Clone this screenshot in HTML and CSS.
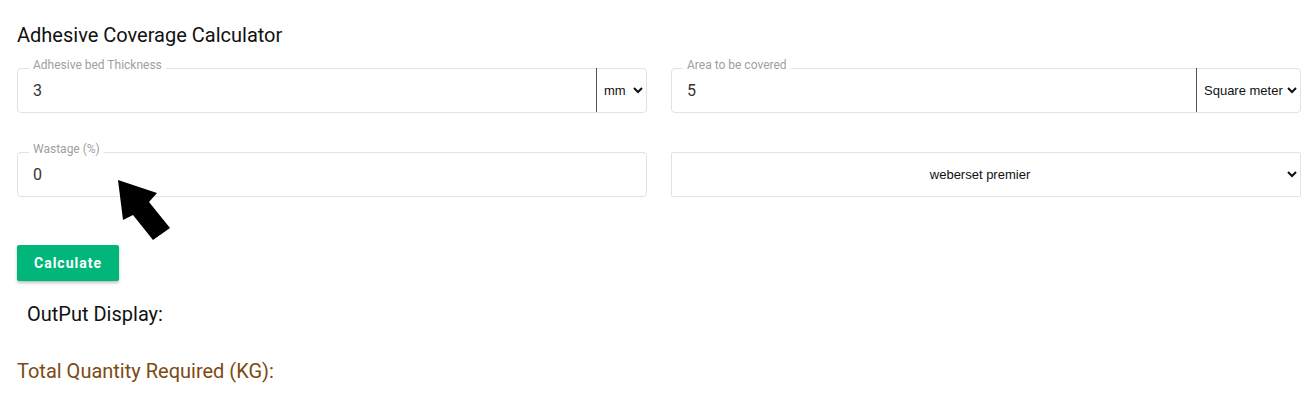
FILE: index.html
```html
<!DOCTYPE html>
<html>
<head>
<meta charset="utf-8">
<link rel="stylesheet" href="styles.css">
</head>
<body>
<div class="page">
  <h1 class="title">Adhesive Coverage Calculator</h1>
  <div class="grid">
    <fieldset class="field">
      <legend class="legend">Adhesive bed Thickness</legend>
      <div class="control">
        <input class="input" type="text" value="3">
        <select class="unit unit-mm"><option>mm</option></select>
      </div>
    </fieldset>
    <fieldset class="field">
      <legend class="legend">Area to be covered</legend>
      <div class="control">
        <input class="input" type="text" value="5">
        <select class="unit unit-sq"><option>Square meter</option></select>
      </div>
    </fieldset>
    <fieldset class="field field-wastage">
      <legend class="legend">Wastage (%)</legend>
      <div class="control">
        <input class="input" type="text" value="0">
      </div>
    </fieldset>
    <div class="product-wrap">
      <select class="product"><option>weberset premier</option></select>
    </div>
  </div>
  <button class="btn">Calculate</button>
  <div class="output-title">OutPut Display:</div>
  <div class="total">Total Quantity Required (KG):</div>
</div>
<svg class="arrow" width="60" height="70" viewBox="0 0 60 70">
  <polygon points="1,1 40,14 32,23 53,49 36,61 16,36 6,41" fill="#000"/>
</svg>
</body>
</html>
```
FILE: styles.css
```css
html, body {
  margin: 0;
  padding: 0;
  background: #fff;
}
body {
  font-family: Roboto, "Liberation Sans", Arial, sans-serif;
  color: #222;
}
.page {
  padding: 24px 7px 0 17px;
}
.title {
  margin: 0;
  font-size: 20px;
  font-weight: 400;
  line-height: 23px;
  color: #111;
}
.grid {
  margin-top: 11px;
  display: grid;
  grid-template-columns: 630px 630px;
  column-gap: 24px;
  row-gap: 29px;
  align-items: end;
}
.field {
  margin: 0;
  padding: 0;
  border: 1px solid #e2e2e6;
  border-radius: 4px;
  min-width: 0;
}
.legend {
  margin-left: 11px;
  padding: 0 4px 6px;
  font-size: 12px;
  line-height: 14px;
  color: #a0a0a0;
}
.control {
  display: flex;
  height: 44px;
  margin-top: -10px;
}
.input {
  flex: 1;
  min-width: 0;
  border: 0;
  outline: none;
  background: transparent;
  padding: 0 0 0 15px;
  font-family: Roboto, "Liberation Sans", Arial, sans-serif;
  font-size: 16px;
  color: #333;
  height: 44px;
}
.unit {
  border: 0;
  border-left: 1px solid #555;
  background: transparent;
  font-family: "Liberation Sans", Arial, sans-serif;
  font-size: 13px;
  color: #111;
  height: 44px;
  padding: 0 0 0 3px;
  outline: none;
}
.unit-mm { width: 50px; }
.unit-sq { width: 104px; }
.product-wrap {
  height: 45px;
}
.product {
  width: 630px;
  height: 45px;
  border: 1px solid #e2e2e6;
  border-radius: 2px;
  background: #fff;
  font-family: "Liberation Sans", Arial, sans-serif;
  font-size: 13px;
  color: #111;
  text-align: center;
  text-align-last: center;
  padding: 0 6px;
  outline: none;
}
.btn {
  display: block;
  margin-top: 48px;
  width: 102px;
  height: 36px;
  border: 0;
  border-radius: 2px;
  background: #00b67a;
  color: #fff;
  font-family: Roboto, "Liberation Sans", Arial, sans-serif;
  font-weight: 700;
  font-size: 14px;
  letter-spacing: 1px;
  box-shadow: 0 2px 3px rgba(0,0,0,0.25);
  padding: 0;
}
.output-title {
  margin-top: 21px;
  margin-left: 10px;
  font-size: 20px;
  line-height: 24px;
  color: #111;
}
.total {
  margin-top: 33px;
  font-size: 20px;
  line-height: 24px;
  color: #7d4a14;
}
.arrow {
  position: absolute;
  left: 117px;
  top: 179px;
}
```
